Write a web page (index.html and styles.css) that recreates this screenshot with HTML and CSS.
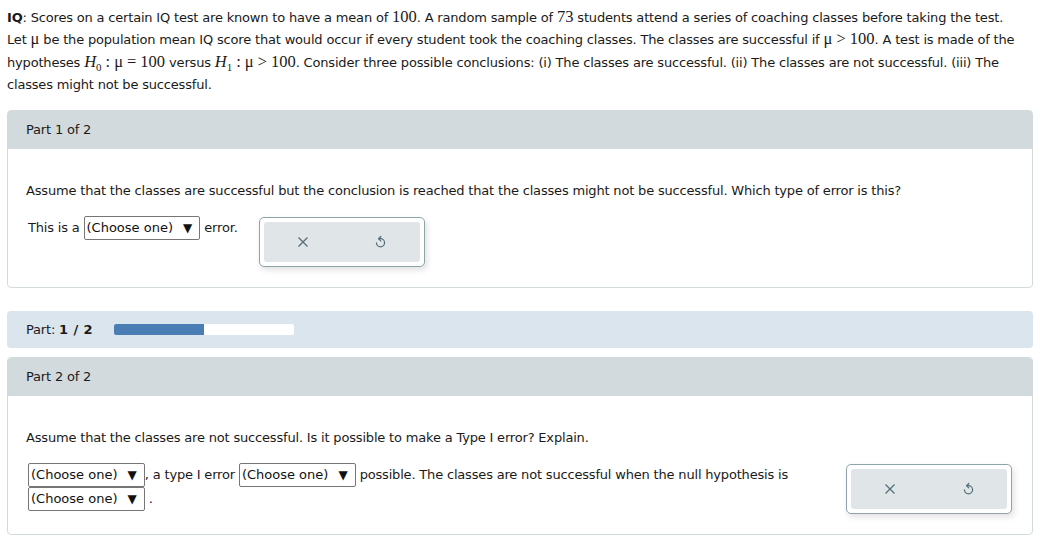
FILE: index.html
```html
<!DOCTYPE html>
<html lang="en">
<head>
  <meta charset="UTF-8">
  <title>IQ Coaching Classes</title>
  <link rel="stylesheet" href="styles.css">
</head>
<body>

  <p class="intro">
    <b class="tag">IQ</b>: Scores on a certain IQ test are known to have a mean of <span class="m">100</span>. A random sample of <span class="m">73</span> students attend a series of coaching classes before taking the test.<br>
    Let <span class="m">μ</span> be the population mean IQ score that would occur if every student took the coaching classes. The classes are successful if <span class="m">μ &gt; 100</span>. A test is made of the<br>
    hypotheses <span class="m"><i>H</i><sub>0</sub><span class="rel">:</span>μ<span class="rel">=</span>100</span> versus <span class="m"><i>H</i><sub>1</sub><span class="rel">:</span>μ<span class="rel">&gt;</span>100</span>. Consider three possible conclusions: (i) The classes are successful. (ii) The classes are not successful. (iii) The<br>
    classes might not be successful.
  </p>

  <section class="part">
    <div class="part-head">Part 1 of 2</div>
    <div class="part-body">
      <p class="question">Assume that the classes are successful but the conclusion is reached that the classes might not be successful. Which type of error is this?</p>
      <div class="answer-row">
        <div class="answer">
          This is a <span class="choose">(Choose one) <span class="arrow">▼</span></span> error.
        </div>
        <div class="tools">
          <div class="tools-inner">
            <button class="tool" type="button">
              <svg width="12" height="12" viewBox="0 0 12 12"><path d="M1.5 1.5 L10.5 10.5 M10.5 1.5 L1.5 10.5" stroke="currentColor" stroke-width="1.3" fill="none"/></svg>
            </button>
            <button class="tool" type="button">
              <svg width="15" height="15" viewBox="0 0 24 24" fill="none" stroke="currentColor" stroke-width="2" stroke-linecap="round" stroke-linejoin="round"><path d="M9 7.5 H12 A6.5 6.5 0 1 1 5.5 14"/><path d="M12.5 4 L9 7.5 L12.5 11"/></svg>
            </button>
          </div>
        </div>
      </div>
    </div>
  </section>

  <div class="progress">
    <span>Part: <b>1 / 2</b></span>
    <div class="bar"><div class="fill" style="width: 50%"></div></div>
  </div>

  <section class="part">
    <div class="part-head">Part 2 of 2</div>
    <div class="part-body">
      <p class="question">Assume that the classes are not successful. Is it possible to make a Type I error? Explain.</p>
      <div class="answer-row">
        <div class="answer">
          <span class="choose">(Choose one) <span class="arrow">▼</span></span>, a type I error <span class="choose">(Choose one) <span class="arrow">▼</span></span> possible. The classes are not successful when the null hypothesis is <span class="choose">(Choose one) <span class="arrow">▼</span></span> .
        </div>
        <div class="tools push">
          <div class="tools-inner">
            <button class="tool" type="button">
              <svg width="12" height="12" viewBox="0 0 12 12"><path d="M1.5 1.5 L10.5 10.5 M10.5 1.5 L1.5 10.5" stroke="currentColor" stroke-width="1.3" fill="none"/></svg>
            </button>
            <button class="tool" type="button">
              <svg width="15" height="15" viewBox="0 0 24 24" fill="none" stroke="currentColor" stroke-width="2" stroke-linecap="round" stroke-linejoin="round"><path d="M9 7.5 H12 A6.5 6.5 0 1 1 5.5 14"/><path d="M12.5 4 L9 7.5 L12.5 11"/></svg>
            </button>
          </div>
        </div>
      </div>
    </div>
  </section>

</body>
</html>
```

FILE: styles.css
```css
body {
  font-family: "DejaVu Sans", Verdana, sans-serif;
  font-size: 13px;
  letter-spacing: -0.18px;
  color: #1a1a1a;
  margin: 0;
  padding: 7px 15px 0 7px;
  background-color: #fff;
}

.intro {
  margin: 0 0 13px;
  line-height: 22.4px;
}

.m {
  font-family: "Liberation Serif", serif;
  font-size: 16.5px;
  letter-spacing: 0;
  line-height: 1;
}

.m sub {
  font-size: 11px;
  vertical-align: -4px;
  line-height: 0;
}

.rel {
  padding: 0 4px;
}

.part {
  border: 1px solid #d3dadd;
  border-radius: 4px;
  background-color: #fff;
}

.part-head {
  background-color: #d3dadd;
  height: 38px;
  line-height: 38px;
  padding-left: 18px;
  border-radius: 3px 3px 0 0;
}

.part-body {
  padding: 33px 20px 20px 18px;
}

.question {
  margin: 0 0 17px;
  line-height: 18px;
}

.answer-row {
  display: flex;
  align-items: flex-start;
  gap: 21px;
}

.answer {
  margin-top: -1px;
  line-height: 24px;
  padding-left: 2px;
}

.choose {
  display: inline-block;
  border: 1px solid #767676;
  border-radius: 2px;
  padding: 0 7px 0 2px;
  line-height: 21px;
  color: #111;
  letter-spacing: 0;
}

.arrow {
  font-size: 12px;
  margin-left: 6px;
}

.tools {
  flex-shrink: 0;
  border: 1px solid #8fa3ab;
  border-radius: 5px;
  background-color: #fff;
  padding: 4px;
  box-shadow: 2px 3px 6px rgba(0, 0, 0, 0.12);
}

.tools.push {
  margin-left: auto;
}

.tools-inner {
  display: flex;
  background-color: #e0e6e8;
  border-radius: 3px;
  width: 156px;
  height: 40px;
}

.tool {
  flex: 1;
  background: none;
  border: none;
  color: #546f7a;
  display: flex;
  align-items: center;
  justify-content: center;
  padding: 0;
}

.progress {
  margin: 23px 0 9px;
  background-color: #dae5ee;
  border-radius: 4px;
  height: 37px;
  display: flex;
  align-items: center;
  padding-left: 19px;
  gap: 21px;
}

.progress b {
  letter-spacing: 0.4px;
}

.bar {
  width: 180px;
  height: 11px;
  background-color: #fff;
  border-radius: 2px;
  overflow: hidden;
}

.fill {
  height: 100%;
  background-color: #4a7db4;
}
```
